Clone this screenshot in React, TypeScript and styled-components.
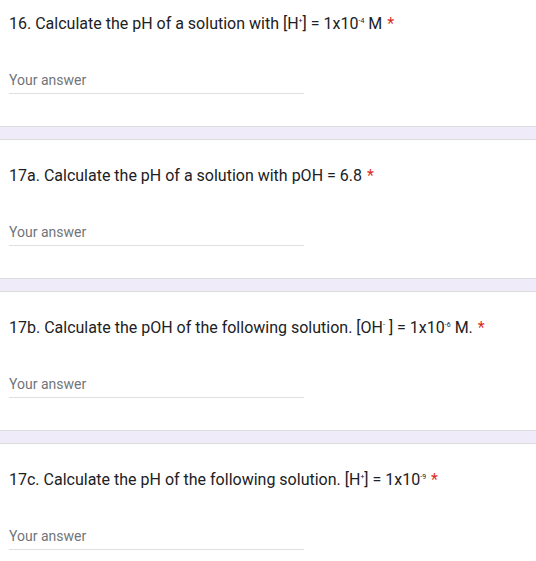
import React from "react";
import styled, { createGlobalStyle } from "styled-components";

const GlobalStyle = createGlobalStyle`
  html, body { margin: 0; padding: 0; background: #fff; }
  body { font-family: Roboto, "Liberation Sans", Arial, sans-serif; }
`;

const Page = styled.div`
  width: 536px;
  display: flex;
  flex-direction: column;
`;

const Band = styled.div`
  height: 12px;
  background: #f0ebf8;
  border-top: 1px solid #dadce0;
  border-bottom: 1px solid #dadce0;
`;

const Card = styled.div<{ $first: boolean }>`
  background: #fff;
  padding: ${(p) => (p.$first ? "12px" : "24px")} 9px 32px 9px;
  display: flex;
  flex-direction: column;
`;

const Title = styled.div`
  font-size: 16px;
  line-height: 24px;
  color: #202124;
`;

const Sup = styled.sup`
  font-size: 7px;
  line-height: 0;
  vertical-align: 6px;
`;

const Required = styled.span`
  color: #d93025;
  margin-left: 5px;
`;

const Answer = styled.div`
  margin-top: 34px;
  width: 295px;
  height: 19px;
  padding-bottom: 4px;
  border-bottom: 1px solid #e0e0e0;
  display: flex;
  align-items: center;
`;

const Placeholder = styled.span`
  font-size: 14px;
  color: #70757a;
`;

const questions: React.ReactNode[] = [
  <>16. Calculate the pH of a solution with [H<Sup>+</Sup>] = 1x10<Sup>-4</Sup> M</>,
  <>17a. Calculate the pH of a solution with pOH = 6.8</>,
  <>17b. Calculate the pOH of the following solution. [OH<Sup>-</Sup> ] = 1x10<Sup>-6</Sup> M.</>,
  <>17c. Calculate the pH of the following solution. [H<Sup>+</Sup>] = 1x10<Sup>-9</Sup></>,
];

export default function App() {
  return (
    <>
      <GlobalStyle />
      <Page>
        {questions.map((title, i) => (
          <React.Fragment key={i}>
            {i > 0 && <Band />}
            <Card $first={i === 0}>
              <Title>
                {title}
                <Required>*</Required>
              </Title>
              <Answer>
                <Placeholder>Your answer</Placeholder>
              </Answer>
            </Card>
          </React.Fragment>
        ))}
      </Page>
    </>
  );
}
